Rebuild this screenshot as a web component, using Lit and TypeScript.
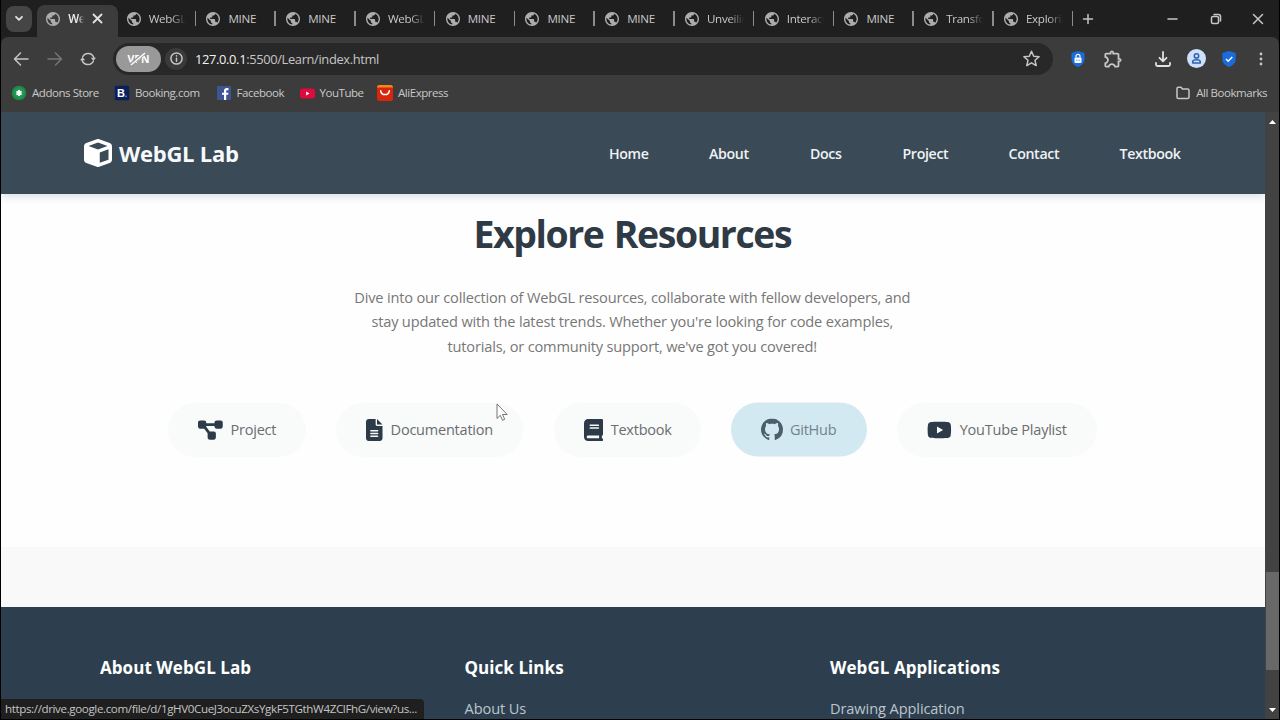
import { LitElement, html, css, svg } from "lit";
import { customElement } from "lit/decorators.js";
import { classMap } from "lit/directives/class-map.js";

const globe = html`<svg class="globe" viewBox="2 2 20 20"><path d="M12 2C6.48 2 2 6.48 2 12s4.48 10 10 10 10-4.48 10-10S17.52 2 12 2zm-1 17.93c-3.95-.49-7-3.85-7-7.93 0-.62.08-1.21.21-1.79L9 15v1c0 1.1.9 2 2 2v1.93zm6.9-2.54c-.26-.81-1-1.39-1.9-1.39h-1v-3c0-.55-.45-1-1-1H8v-2h2c.55 0 1-.45 1-1V7h2c1.1 0 2-.9 2-2v-.41c2.93 1.19 5 4.06 5 7.41 0 2.08-.8 3.97-2.1 5.39z"/></svg>`;

const tabs = ["WebGL", "MINE", "MINE", "WebGL", "MINE", "MINE", "MINE", "Unveilin", "Interact", "MINE", "Transfor", "Explorin"];

const bookmarks = [
  { cls: "addons", text: "Addons Store", icon: svg`<circle cx="8" cy="8" r="7.3" fill="#1c8a47"/><circle cx="8" cy="8" r="5.4" fill="#2ba55b" opacity=".5"/><path d="M8 5v6M5.4 6.500l5.200 3M10.600 6.500L5.400 9.500" stroke="#fff" stroke-width="1.9"/>` },
  { cls: "booking", text: "Booking.com", icon: svg`<rect x=".8" y=".8" width="14.4" height="14.4" rx="1.5" fill="#0a1f5c"/><text x="3" y="12" class="b">B</text><circle cx="12" cy="11.3" r=".9" fill="#35a6e8"/>` },
  { cls: "facebook", text: "Facebook", icon: svg`<rect x="1" y="1" width="14" height="14" rx="1" fill="#3d5592"/><path d="M10.2 15V9.8h1.9l.3-2.1h-2.2V6.4c0-.7.3-1.1 1.1-1.1h1.2V3.2c-.3 0-.9-.1-1.6-.1-1.8 0-2.9 1-2.9 2.9v1.7H6v2.1h2V15z" fill="#fff"/>` },
  { cls: "youtube", text: "YouTube", icon: svg`<rect x="0" y="2.6" width="16" height="10.8" rx="3" fill="#e00b3c"/><path d="M6.500 5.800v4.400L10.200 8z" fill="#fff"/>` },
  { cls: "ali", text: "AliExpress", icon: svg`<rect x="0" y="0" width="16" height="16" rx="2.5" fill="#d8260c"/><path d="M0 2.500Q0 0 2.500 0h11Q16 0 16 2.500z" fill="#f08a1c"/><path d="M3.700 5.800c.6 5 8 5 8.600 0" fill="none" stroke="#fff" stroke-width="1.5" stroke-linecap="round"/>` },
];

const resources = [
  { text: "Project", box: "0 0 576 512", d: "M0 80C0 53.5 21.5 32 48 32l96 0c26.5 0 48 21.5 48 48l0 16 192 0 0-16c0-26.5 21.5-48 48-48l96 0c26.5 0 48 21.5 48 48l0 96c0 26.5-21.5 48-48 48l-96 0c-26.5 0-48-21.5-48-48l0-16-192 0 0 16c0 1.7-.1 3.4-.3 5L272 288l96 0c26.5 0 48 21.5 48 48l0 96c0 26.5-21.5 48-48 48l-96 0c-26.5 0-48-21.5-48-48l0-96c0-1.7 .1-3.4 .3-5L144 224l-96 0c-26.5 0-48-21.5-48-48L0 80z" },
  { text: "Documentation", box: "0 0 384 512", d: "M64 0C28.7 0 0 28.7 0 64L0 448c0 35.3 28.7 64 64 64l256 0c35.3 0 64-28.7 64-64l0-288-128 0c-17.7 0-32-14.3-32-32L224 0 64 0zM256 0l0 128 128 0L256 0zM112 256l160 0c8.8 0 16 7.2 16 16s-7.2 16-16 16l-160 0c-8.8 0-16-7.2-16-16s7.2-16 16-16zm0 64l160 0c8.8 0 16 7.2 16 16s-7.2 16-16 16l-160 0c-8.8 0-16-7.2-16-16s7.2-16 16-16zm0 64l160 0c8.8 0 16 7.2 16 16s-7.2 16-16 16l-160 0c-8.8 0-16-7.2-16-16s7.2-16 16-16z" },
  { text: "Textbook", box: "0 0 448 512", d: "M96 0C43 0 0 43 0 96L0 416c0 53 43 96 96 96l288 0 32 0c17.7 0 32-14.3 32-32s-14.3-32-32-32l0-64c17.7 0 32-14.3 32-32l0-320c0-17.7-14.3-32-32-32L384 0 96 0zm0 384l256 0 0 64L96 448c-17.7 0-32-14.3-32-32s14.3-32 32-32zm32-240c0-8.8 7.2-16 16-16l192 0c8.8 0 16 7.2 16 16s-7.2 16-16 16l-192 0c-8.8 0-16-7.2-16-16zm16 48l192 0c8.8 0 16 7.2 16 16s-7.2 16-16 16l-192 0c-8.8 0-16-7.2-16-16s7.2-16 16-16z" },
  { text: "GitHub", box: "0 0 16 16", hover: true, d: "M8 0C3.58 0 0 3.58 0 8c0 3.54 2.29 6.53 5.47 7.59.4.07.55-.17.55-.38 0-.19-.01-.82-.01-1.49-2.01.37-2.53-.49-2.69-.94-.09-.23-.48-.94-.82-1.13-.28-.15-.68-.52-.01-.53.63-.01 1.08.58 1.23.82.72 1.21 1.87.87 2.33.66.07-.52.28-.87.51-1.07-1.78-.2-3.64-.89-3.64-3.95 0-.87.31-1.59.82-2.15-.08-.2-.36-1.02.08-2.12 0 0 .67-.21 2.2.82.64-.18 1.32-.27 2-.27.68 0 1.36.09 2 .27 1.53-1.04 2.2-.82 2.2-.82.44 1.1.16 1.92.08 2.12.51.56.82 1.27.82 2.15 0 3.07-1.87 3.75-3.65 3.95.29.25.54.73.54 1.48 0 1.07-.01 1.93-.01 2.2 0 .21.15.46.55.38A8.013 8.013 0 0016 8c0-4.42-3.58-8-8-8z" },
  { text: "YouTube Playlist", box: "0 0 576 512", d: "M549.655 124.083c-6.281-23.65-24.787-42.276-48.284-48.597C458.781 64 288 64 288 64S117.22 64 74.629 75.486c-23.497 6.322-42.003 24.947-48.284 48.597-11.412 42.867-11.412 132.305-11.412 132.305s0 89.438 11.412 132.305c6.281 23.65 24.787 41.5 48.284 47.821C117.22 448 288 448 288 448s170.78 0 213.371-11.486c23.497-6.321 42.003-24.171 48.284-47.821 11.412-42.867 11.412-132.305 11.412-132.305s0-89.438-11.412-132.305zm-317.51 213.508V175.185l142.739 81.205-142.739 81.201z" },
];

@customElement("browser-chrome")
class BrowserChrome extends LitElement {
  static styles = css`
    :host { display: block; height: 112px; background: #1f1f1f; color: #c9c9c9; font-family: "Open Sans", sans-serif; }
    * { box-sizing: border-box; }
    svg { display: block; flex: none; overflow: visible; }
    .line { fill: none; stroke: #c6c6c6; stroke-width: 1.5; stroke-linecap: round; stroke-linejoin: round; }
    .bold { stroke: #e2e2e2; stroke-width: 1.8; }
    .strip { display: flex; height: 37px; padding: 0 0 0 5px; align-items: center; }
    .chevron { width: 26px; height: 26px; margin-right: 5px; border-radius: 8px; background: #454545; display: grid; place-items: center; }
    .tab { width: 79.75px; height: 37px; flex: none; display: flex; align-items: center; padding-left: 9px; font-size: 11.6px; letter-spacing: -0.3px; }
    .active { width: 80.5px; height: 32px; align-self: flex-end; background: #3c3c3c; border-radius: 8px 8px 0 0; padding: 0 0 5px 9px; color: #eee; }
    .globe { width: 14px; height: 14px; fill: #adadad; margin-right: 8.2px; }
    .title { flex: none; width: 37px; overflow: hidden; white-space: nowrap; line-height: 18px; }
    .long { -webkit-mask-image: linear-gradient(90deg, #000 60%, transparent 100%); mask-image: linear-gradient(90deg, #000 60%, transparent 100%); }
    .active .title { width: 16px; margin-right: 8.6px; font-weight: 600; }
    .sep { width: 1.5px; height: 15px; margin-left: 9px; background: #8c8c8c; }
    .plus { margin-left: 8px; margin-right: auto; }
    .win { display: grid; grid-template-columns: 43px 43px 42px; justify-items: center; align-items: center; }
    .toolbar { height: 75px; background: #3c3c3c; border-radius: 7px 7px 0 0; }
    .nav { display: flex; align-items: center; height: 43px; padding: 0 0 0 12px; }
    .nav .fwd { margin-left: 18px; opacity: .42; }
    .nav .reload { margin-left: 17px; }
    .address { flex: none; width: 940px; height: 32px; margin-left: 17px; border-radius: 16px; background: #282828; display: flex; align-items: center; padding: 0 13px 0 3px; }
    .vpn { width: 45px; height: 26px; border-radius: 13px; background: #999; display: grid; place-items: center; color: #fff; font-size: 10.5px; font-weight: 700; line-height: 14px; position: relative; }
    .vpn svg { position: absolute; left: 10px; top: 6px; }
    .info { width: 22px; height: 22px; margin: 0 8px 0 4px; border-radius: 50%; background: #3a3a3a; display: grid; place-items: center; }
    .url { flex: 1; font-size: 12.9px; letter-spacing: -0.36px; color: #c5c5c5; line-height: 20px; }
    .url b { font-weight: 500; color: #f2f2f2; }
    .tools { display: grid; grid-template-columns: 34px 35px 50px 33px 32px 32px; justify-items: center; align-items: center; margin-left: 8px; flex: none; }
    .download { justify-self: end; margin-right: 9px; }
    .marks { display: flex; align-items: center; height: 26px; padding: 0 12px 0 10px; font-size: 11.5px; letter-spacing: -0.45px; line-height: 16px; }
    .mark { display: flex; align-items: center; gap: 5px; white-space: nowrap; }
    .mark svg { width: 16px; height: 16px; }
    .addons { width: 103px; } .booking { width: 101.5px; } .facebook { width: 84px; } .youtube { width: 77.5px; }
    .youtube svg { width: 15px; height: 15px; }
    .b { font: 700 11px "Liberation Sans", sans-serif; fill: #fff; }
    .all { margin-left: auto; gap: 6px; }
    .all svg { width: 14px; height: 14px; }
  `;
  render() {
    return html`
      <div class="strip">
        <div class="chevron"><svg width="8" height="5" viewBox="0 0 8 5"><path class="line bold" d="M1 .8l3 3 3-3"/></svg></div>
        <div class="tab active">${globe}<span class="title long">Web</span><svg width="9" height="9" viewBox="0 0 9 9"><path class="line bold" d="M.5.5l8 8M8.500.5l-8 8"/></svg></div>
        ${tabs.map(t => html`<div class="tab">${globe}<span class=${classMap({ title: true, long: t.length > 4 })}>${t}</span><i class="sep"></i></div>`)}
        <svg class="plus" width="10" height="10" viewBox="0 0 10 10"><path class="line" d="M5 .5v9M.5 5h9"/></svg>
        <div class="win">
          <svg width="10" height="2"><path class="line" d="M0 1h9"/></svg>
          <svg width="10" height="10" viewBox="0 0 10 10"><path class="line" d="M3 .5h4.500a2 2 0 0 1 2 2V7"/><rect class="line" x=".5" y="2.5" width="7" height="7" rx="1.5"/></svg>
          <svg width="10" height="10" viewBox="0 0 10 10"><path class="line" d="M.5.5l9 9M9.500.5l-9 9"/></svg>
        </div>
      </div>
      <div class="toolbar">
        <div class="nav">
          <svg width="16" height="14" viewBox="0 0 16 14"><path class="line" d="M15 7H1.500M7.500 1l-6 6 6 6"/></svg>
          <svg class="fwd" width="16" height="14" viewBox="0 0 16 14"><path class="line" d="M1 7h13.500M8.500 1l6 6-6 6"/></svg>
          <svg class="reload" width="16" height="16" viewBox="0 0 16 16"><path class="line" d="M2.600 6A6 6 0 0 1 13.800 6.500M13.400 10A6 6 0 0 1 2.200 9.500"/><path d="M10.800 6.700H16l-2.600 3.100zM5.200 9.300H0l2.600-3.100z" fill="#c6c6c6"/></svg>
          <div class="address">
            <div class="vpn">VPN<svg width="25" height="14"><path d="M4 13L19 1" stroke="#999" stroke-width="3.5"/><path d="M5 13L19 1" stroke="#fff" stroke-width="1.5"/></svg></div>
            <div class="info"><svg width="13" height="13" viewBox="0 0 13 13"><circle class="line" cx="6.5" cy="6.5" r="5.6"/><path class="line" d="M6.500 6.300v3M6.500 3.800v.1"/></svg></div>
            <div class="url"><b>127.0.0.1</b>:5500/Learn/index.html</div>
            <svg width="17" height="17" viewBox="0 0 17 17"><path class="line" d="M8.500 1.200l2.200 5 5.400.5-4.100 3.600 1.200 5.300-4.700-2.800-4.700 2.800L5 10.300.9 6.700l5.400-.5z"/></svg>
          </div>
          <div class="tools">
            <svg width="14" height="16" viewBox="0 0 14 16"><path d="M7 0l6.500 2v6c0 4-3 6.800-6.500 8C3.500 14.800.5 12 .5 8V2z" fill="#1a6bdc"/><rect x="3.5" y="6.5" width="7" height="5.5" rx="1" fill="#fff"/><path d="M5 6.500V5.300a2 2 0 0 1 4 0v1.200" fill="none" stroke="#fff" stroke-width="1.2"/><path d="M5.300 9.200h1M7.700 9.200h1" stroke="#1a6bdc"/></svg>
            <svg width="18" height="18" viewBox="1.5 2 20.5 20.5"><path fill="#c6c6c6" d="M10.500 4.500c.28 0 .5.22.5.5v2h6v6h2c.28 0 .5.22.5.5s-.22.5-.5.5h-2v6h-2.120c-.68-1.750-2.390-3-4.380-3s-3.700 1.250-4.380 3H4v-2.120c1.750-.68 3-2.390 3-4.380 0-1.990-1.240-3.700-2.990-4.380L4 7h6V5c0-.28.22-.5.5-.5m0-2C9.120 2.500 8 3.620 8 5H4c-1.100 0-1.990.9-1.990 2v3.800h.29c1.490 0 2.700 1.210 2.700 2.700s-1.210 2.700-2.700 2.700H2V20c0 1.100.9 2 2 2h3.800v-.3c0-1.490 1.210-2.700 2.700-2.700s2.700 1.210 2.700 2.700v.3H17c1.100 0 2-.9 2-2v-4c1.380 0 2.500-1.120 2.500-2.500S20.380 11 19 11V7c0-1.100-.9-2-2-2h-4c0-1.380-1.120-2.500-2.500-2.500z"/></svg>
            <svg class="download" width="16" height="16" viewBox="0 0 16 16"><path class="line bold" d="M8 1v9M4.500 6.800L8 10.300l3.500-3.500M1 12v1.500A1.500 1.500 0 0 0 2.500 15h11a1.500 1.500 0 0 0 1.500-1.500V12"/></svg>
            <svg width="19" height="19" viewBox="0 0 19 19"><circle cx="9.5" cy="9.5" r="9.5" fill="#cfe0fb"/><circle cx="9.5" cy="6.9" r="2.2" fill="none" stroke="#2f62ad" stroke-width="1.5"/><path d="M5.700 13.900v-1.200c0-2.600 7.600-2.600 7.600 0v1.200z" fill="none" stroke="#2f62ad" stroke-width="1.5" stroke-linejoin="round"/></svg>
            <svg width="14" height="16" viewBox="0 0 14 16"><path d="M7 0l6.700 2v6c0 4-3.200 6.800-6.700 8C3.500 14.800.3 12 .3 8V2z" fill="#1a6bdc"/><path d="M4 8l2.200 2.200L10.300 6" fill="none" stroke="#fff" stroke-width="1.5"/></svg>
            <svg width="4" height="14" viewBox="0 0 4 14" fill="#c6c6c6"><circle cx="2" cy="2" r="1.4"/><circle cx="2" cy="7" r="1.4"/><circle cx="2" cy="12" r="1.4"/></svg>
          </div>
        </div>
        <div class="marks">
          ${bookmarks.map(b => html`<div class="mark ${b.cls}"><svg viewBox="0 0 16 16">${b.icon}</svg>${b.text}</div>`)}
          <div class="mark all"><svg viewBox="0 0 14 14"><path class="line" d="M1 2.500A1.300 1.300 0 0 1 2.300 1.200H5l1.500 1.800h5.200A1.300 1.300 0 0 1 13 4.300v7a1.300 1.300 0 0 1-1.300 1.300H2.300A1.300 1.300 0 0 1 1 11.300z"/></svg>All Bookmarks</div>
        </div>
      </div>`;
  }
}

@customElement("lab-page")
class LabPage extends LitElement {
  static styles = css`
    :host { display: block; flex: none; width: 1264px; height: 607px; overflow: hidden; background: #fefefe; font-family: "Open Sans", sans-serif; }
    * { box-sizing: border-box; margin: 0; }
    svg { display: block; flex: none; }
    header { position: relative; height: 81.5px; padding: 2px 0 0 83px; background: #3a4a57; display: flex; align-items: center; box-shadow: 0 2px 9px rgba(60,80,95,.2); color: #f6f9fb; }
    .logo { display: flex; align-items: center; gap: 7px; width: 525px; padding-bottom: 1px; font-size: 22px; font-weight: 700; letter-spacing: -0.25px; line-height: 30px; }
    nav { display: grid; grid-template-columns: 100px 101px 92.5px 106px 111px 61px; font-size: 14.2px; font-weight: 550; letter-spacing: -0.35px; line-height: 20px; color: #eef2f4; }
    .explore { height: 353.5px; padding: 15.5px 1.5px 0 0; text-align: center; }
    h1 { font-size: 37.4px; font-weight: 700; letter-spacing: -1.4px; word-spacing: 2px; line-height: 49px; color: #2e3a45; }
    p { margin: 26.7px 0 44.8px; font-size: 14.6px; line-height: 24.5px; letter-spacing: -0.18px; color: #777; }
    .links { display: grid; grid-template-columns: 138px 187px 147px 136px 199.5px; column-gap: 30.3px; padding-left: 167px; }
    .link { height: 54px; border-radius: 27px; background: #f9fafa; display: flex; align-items: center; gap: 7.8px; padding-left: 30px; font-size: 14.5px; letter-spacing: -0.22px; line-height: 20px; color: #6a6d70; white-space: nowrap; }
    .link svg { height: 22px; fill: #2d3b48; }
    .hover { background: #d3e9f1; color: #72838a; gap: 7px; transform: translateY(-0.5px); }
    .hover svg { fill: #4b5f6b; }
    .band { height: 60px; background: #f9f9f9; }
    footer { height: 112px; background: #2d3f4e; padding: 49px 0 0 99px; display: grid; grid-template-columns: 364.5px 365.5px 300px; }
    h2 { font-size: 17px; font-weight: 700; line-height: 24px; letter-spacing: 0.06px; color: #fff; }
    .item { margin-top: 17.8px; font-size: 14.6px; line-height: 20px; letter-spacing: -0.1px; color: #bcc5cc; }
  `;
  render() {
    return html`
      <header>
        <div class="logo"><svg width="28" height="28" viewBox="0 0 512 512" fill="#fff"><path d="M234.500 5.700c13.900-5 29.100-5 43.100 0l192 68.600C495 83.400 512 107.500 512 134.600l0 242.900c0 27-17 51.200-42.500 60.300l-192 68.600c-13.900 5-29.100 5-43.100 0l-192-68.600C17 428.600 0 404.500 0 377.400L0 134.600c0-27 17-51.200 42.500-60.300l192-68.600zM256 66L82.300 128 256 190l173.700-62L256 66zm32 368.600l160-57.100 0-188L288 246.600l0 188z"/></svg>WebGL Lab</div>
        <nav>${["Home", "About", "Docs", "Project", "Contact", "Textbook"].map(n => html`<span>${n}</span>`)}</nav>
      </header>
      <section class="explore">
        <h1>Explore Resources</h1>
        <p>Dive into our collection of WebGL resources, collaborate with fellow developers, and<br>stay updated with the latest trends. Whether you're looking for code examples,<br>tutorials, or community support, we've got you covered!</p>
        <div class="links">${resources.map(r => html`<div class=${classMap({ link: true, hover: !!r.hover })}><svg viewBox=${r.box}><path d=${r.d}/></svg>${r.text}</div>`)}</div>
      </section>
      <div class="band"></div>
      <footer>
        <div><h2>About WebGL Lab</h2></div>
        <div><h2>Quick Links</h2><div class="item">About Us</div></div>
        <div><h2>WebGL Applications</h2><div class="item">Drawing Application</div></div>
      </footer>`;
  }
}

@customElement("app-root")
class AppRoot extends LitElement {
  static styles = css`
    :host { display: block; position: relative; width: 1280px; height: 720px; box-sizing: border-box; border: solid #000; border-width: 0 1px 1px; overflow: hidden; font-family: "Open Sans", sans-serif; }
    .view { display: flex; }
    .bar { box-sizing: border-box; width: 14px; height: 607px; background: #424242; display: flex; flex-direction: column; align-items: center; padding: 8px 0 7px 1px; }
    .thumb { align-self: stretch; margin: 448px 0 auto; height: 98px; background: #686868; }
    .bar svg { display: block; fill: #fff; }
    .status { position: absolute; left: 0; bottom: 0; width: 423px; height: 20px; padding-left: 4px; box-sizing: border-box; border-radius: 0 4px 0 0; background: #1f1f1f; color: #c4c4c4; font-size: 11.6px; letter-spacing: -0.38px; line-height: 19px; white-space: nowrap; }
    .cursor { position: absolute; left: 495px; top: 403px; }
  `;
  render() {
    return html`
      <browser-chrome></browser-chrome>
      <div class="view">
        <lab-page></lab-page>
        <div class="bar">
          <svg width="7" height="4"><path d="M0 4L3.500 0 7 4z"/></svg>
          <div class="thumb"></div>
          <svg width="7" height="4"><path d="M0 0l3.500 4L7 0z"/></svg>
        </div>
      </div>
      <div class="status">https://drive.google.com/file/d/1gHV0CueJ3ocuZXsYgkF5TGthW4ZClFhG/view?us...</div>
      <svg class="cursor" width="13" height="19" viewBox="0 0 13 19"><path d="M1 1v14.500l3.300-3.200 2.200 5 2.200-1-2.200-4.800h4.700z" fill="#fff" stroke="#666" stroke-width=".9"/></svg>`;
  }
}
